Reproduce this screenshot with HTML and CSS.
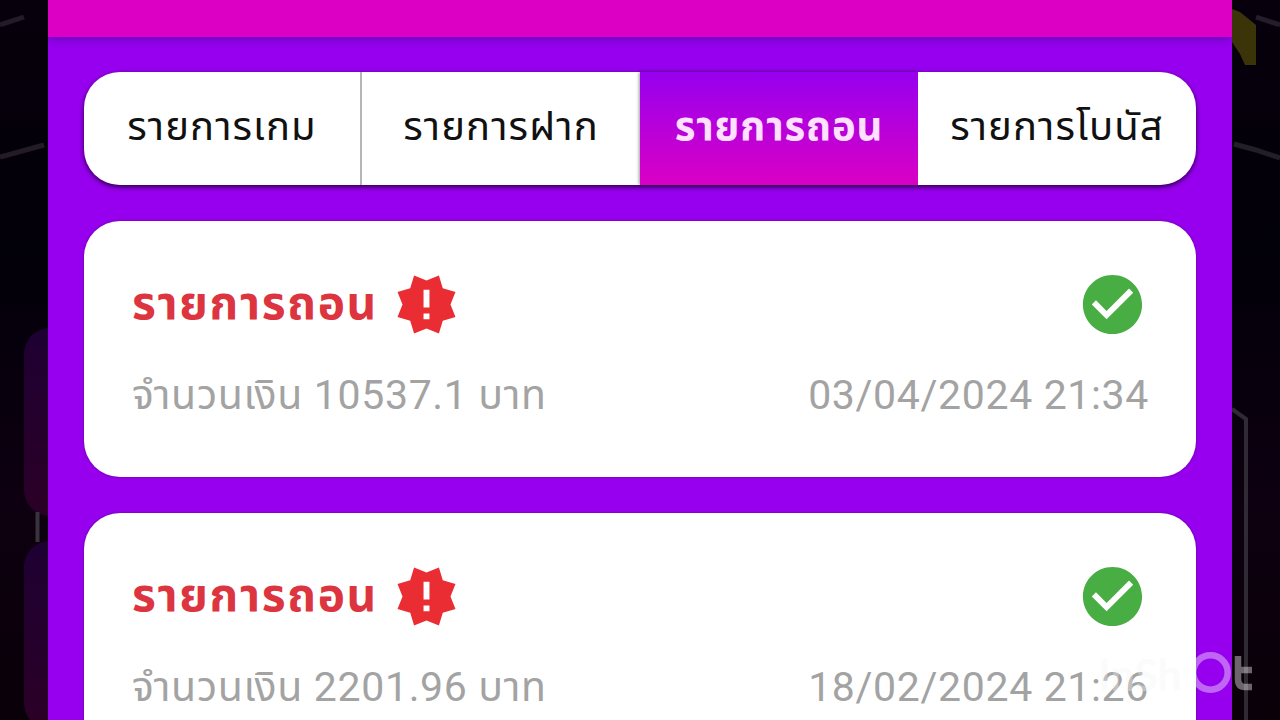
FILE: index.html
```
<!DOCTYPE html>
<html lang="th">
<head>
    <meta charset="UTF-8">
    <meta name="viewport" content="width=device-width, initial-scale=1.0">
    <title>รายการถอน</title>
    <link rel="stylesheet" href="styles.css">
</head>
<body>
    <svg class="backdrop" viewBox="0 0 1280 720" aria-hidden="true">
        <defs>
            <linearGradient id="glow" x1="0" y1="0" x2="0" y2="1">
                <stop offset="0" stop-color="#1e0033"/>
                <stop offset="1" stop-color="#2b0026"/>
            </linearGradient>
        </defs>
        <rect x="24" y="328" width="80" height="188" rx="26" fill="url(#glow)"/>
        <rect x="24" y="541" width="80" height="188" rx="26" fill="url(#glow)"/>
        <path d="M0 25L24 17M0 157L44 145" stroke="#231c28" stroke-width="5" fill="none"/>
        <path d="M37.500 512V542" stroke="#39333b" stroke-width="4"/>
        <path d="M1232 9L1240 12L1256 25V65H1245L1240 54L1232 42Z" fill="#3b3408"/>
        <path d="M1256 17L1280 25M1234 144L1256 150L1280 158" stroke="#231e2a" stroke-width="5" fill="none"/>
        <path d="M1232 409L1246 419V720" stroke="#302a35" stroke-width="4" fill="none"/>
    </svg>

    <div class="panel">
        <header></header>
        <main>
            <nav class="tabs">
                <a class="tab">รายการเกม</a>
                <a class="tab">รายการฝาก</a>
                <a class="tab active">รายการถอน</a>
                <a class="tab">รายการโบนัส</a>
            </nav>

            <section class="card">
                <div class="row">
                    <h2>รายการถอน</h2>
                    <svg class="icon alert" viewBox="0 0 24 24"><path fill-rule="evenodd" d="M7.800 2.200L12 3.900L16.200 2.200L17.500 6.500L21.800 7.800L20.100 12L21.800 16.200L17.500 17.500L16.200 21.800L12 20.100L7.800 21.800L6.500 17.500L2.200 16.200L3.900 12L2.200 7.800L6.500 6.500ZM11 7V13H13V7ZM11 15V17H13V15Z"/></svg>
                    <svg class="icon check" viewBox="0 0 24 24"><path d="M12 2C6.480 2 2 6.480 2 12s4.480 10 10 10 10-4.480 10-10S17.520 2 12 2zm-2 15l-5-5 1.410-1.410L10 14.170l7.590-7.590L19 8l-9 9z"/></svg>
                </div>
                <div class="row details">
                    <p>จำนวนเงิน 10537.1 บาท</p>
                    <time>03/04/2024 21:34</time>
                </div>
            </section>

            <section class="card">
                <div class="row">
                    <h2>รายการถอน</h2>
                    <svg class="icon alert" viewBox="0 0 24 24"><path fill-rule="evenodd" d="M7.800 2.200L12 3.900L16.200 2.200L17.500 6.500L21.800 7.800L20.100 12L21.800 16.200L17.500 17.500L16.200 21.800L12 20.100L7.800 21.800L6.500 17.500L2.200 16.200L3.900 12L2.200 7.800L6.500 6.500ZM11 7V13H13V7ZM11 15V17H13V15Z"/></svg>
                    <svg class="icon check" viewBox="0 0 24 24"><path d="M12 2C6.480 2 2 6.480 2 12s4.480 10 10 10 10-4.480 10-10S17.520 2 12 2zm-2 15l-5-5 1.410-1.410L10 14.170l7.590-7.590L19 8l-9 9z"/></svg>
                </div>
                <div class="row details">
                    <p>จำนวนเงิน 2201.96 บาท</p>
                    <time>18/02/2024 21:26</time>
                </div>
            </section>
        </main>
    </div>

    <div class="watermark">
        <span>InSh</span>
        <svg viewBox="0 0 64 46"><circle cx="20.500" cy="20.500" r="17.200"/><path d="M48 4V27Q48 35 55 35H62M51 18H62"/></svg>
    </div>
</body>
</html>
```
FILE: styles.css
```
body {
    margin: 0;
    height: 720px;
    overflow: hidden;
    position: relative;
    background: linear-gradient(to bottom, #07000c, #020009 35%, #0d0010 70%, #090008);
    font-family: Roboto, 'Noto Sans Thai', 'Noto Sans', sans-serif;
}

.backdrop {
    position: absolute;
    width: 1280px;
    height: 720px;
}

.panel {
    position: relative;
    width: 1184px;
    height: 720px;
    margin: 0 auto;
    overflow: hidden;
    background: #9700ef;
}

header {
    position: relative;
    height: 37px;
    background: #dc00c5;
    box-shadow: 0 2px 9px rgba(50, 20, 130, 0.5);
}

main {
    padding: 35px 36px 0;
}

.tabs {
    display: grid;
    grid-template-columns: repeat(4, 1fr);
    height: 113px;
    margin-bottom: 36px;
    border-radius: 36px;
    box-shadow: 0 2px 5px rgba(20, 0, 35, 0.85);
}

.tab {
    display: flex;
    align-items: center;
    justify-content: center;
    box-sizing: border-box;
    padding-bottom: 1px;
    background: #fff;
    color: #111;
    font-size: 40px;
    letter-spacing: 1.1px;
    white-space: nowrap;
}

.tab:first-child {
    border-radius: 36px 0 0 36px;
    border-right: 2px solid #b5b5b5;
}

.tab:last-child {
    border-radius: 0 36px 36px 0;
}

.tab.active {
    background: linear-gradient(to bottom, #9700ef, #da00c4);
    color: #ffe0ff;
    font-weight: bold;
    letter-spacing: 0.9px;
    box-shadow: -1px 0 3px rgba(0, 0, 0, 0.4);
}

.card {
    box-sizing: border-box;
    height: 256px;
    margin-bottom: 36px;
    padding: 48px 48px 0;
    border-radius: 36px;
    background: #fff;
    box-shadow: 0 0 3px rgba(60, 0, 100, 0.6);
}

.row {
    display: flex;
    align-items: center;
    height: 71px;
}

h2 {
    margin: 0;
    color: #dc3540;
    font-size: 46px;
    line-height: 69px;
    height: 71px;
    letter-spacing: 1.7px;
    white-space: nowrap;
}

.icon {
    width: 71px;
    height: 71px;
    flex: none;
}

.alert {
    margin-left: 13px;
    fill: #ea2c33;
}

.check {
    margin-left: auto;
    fill: #48ad43;
}

.details {
    justify-content: space-between;
    height: 60px;
    margin-top: 25px;
    color: #a3a3a3;
    font-size: 41px;
    letter-spacing: 0.65px;
    white-space: nowrap;
}

.details p {
    margin: 1px 0 0;
}

.details time {
    margin-right: -1px;
}

.watermark {
    position: absolute;
    left: 1098px;
    top: 649px;
    display: flex;
    align-items: center;
    color: rgba(245, 245, 245, 0.35);
    font: bold 43px Lato, sans-serif;
}

.watermark span {
    width: 92px;
}

.watermark svg {
    width: 64px;
    height: 46px;
    fill: none;
    stroke: rgba(255, 255, 255, 0.4);
    stroke-width: 6.500;
}
```
